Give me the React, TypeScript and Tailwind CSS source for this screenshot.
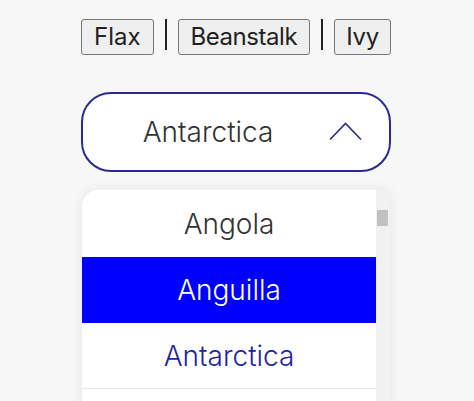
import React from "react";

export default function App() {
  const btn =
    "shrink-0 h-[36px] border border-[#767676] rounded-[3px] bg-[#efefef] text-[24px] leading-none text-[#222] flex items-center";
  return (
    <div
      className="h-[401px] w-full bg-[#f7f7f7] overflow-hidden"
      style={{ fontFamily: "Inter, 'Noto Sans', sans-serif" }}
    >
      <div className="ml-[81px] w-[310px] pt-[19px] flex flex-col">
        <div className="flex items-center gap-[11px] w-max">
          <button className={btn + " px-[12px]"}>Flax</button>
          <div className="shrink-0 w-[2px] h-[31px] bg-[#222] self-start"></div>
          <button className={btn + " px-[12px] tracking-[-0.45px]"}>Beanstalk</button>
          <div className="shrink-0 w-[2px] h-[31px] bg-[#222] self-start"></div>
          <button className={btn + " px-[11px] tracking-[-0.3px]"}>Ivy</button>
        </div>

        <div className="mt-[37px] h-[80px] rounded-[30px] border-2 border-[#2a2a90] bg-white flex items-center">
          <div className="flex-1 text-center text-[28px] font-light text-[#333] pl-[4px]">
            Antarctica
          </div>
          <svg width="33" height="19" viewBox="0 0 33 19" className="mr-[27px] mb-[1px]">
            <polyline
              points="1,17.5 16.5,1.5 32,17.5"
              fill="none"
              stroke="#2a2a90"
              strokeWidth="1.6"
            />
          </svg>
        </div>

        <div className="mt-[17px] ml-[1px] w-[308px] h-[240px] rounded-tl-[18px] rounded-tr-[8px] bg-[#f3f3f3] shadow-[0_0_12px_rgba(0,0,0,0.08)] flex overflow-hidden">
          <div className="w-[294px] flex flex-col">
            <div className="h-[1px] bg-[#f3f3f3]"></div>
            <div className="h-[67px] bg-white rounded-tl-[16px] flex items-center justify-center text-[28px] font-light text-[#333]">
              Angola
            </div>
            <div className="h-[66px] bg-[#0000ff] flex items-center justify-center text-[28px] font-light text-white">
              Anguilla
            </div>
            <div className="h-[66px] bg-white border-b border-[#e6e6e6] flex items-center justify-center text-[28px] font-light text-[#1f1fa8]">
              Antarctica
            </div>
            <div className="flex-1 bg-white"></div>
          </div>
          <div className="flex-1 bg-[#f1f1f1] flex justify-start">
            <div className="mt-[21px] ml-[1px] w-[11px] h-[16px] bg-[#c1c1c1]"></div>
          </div>
        </div>
      </div>
    </div>
  );
}
